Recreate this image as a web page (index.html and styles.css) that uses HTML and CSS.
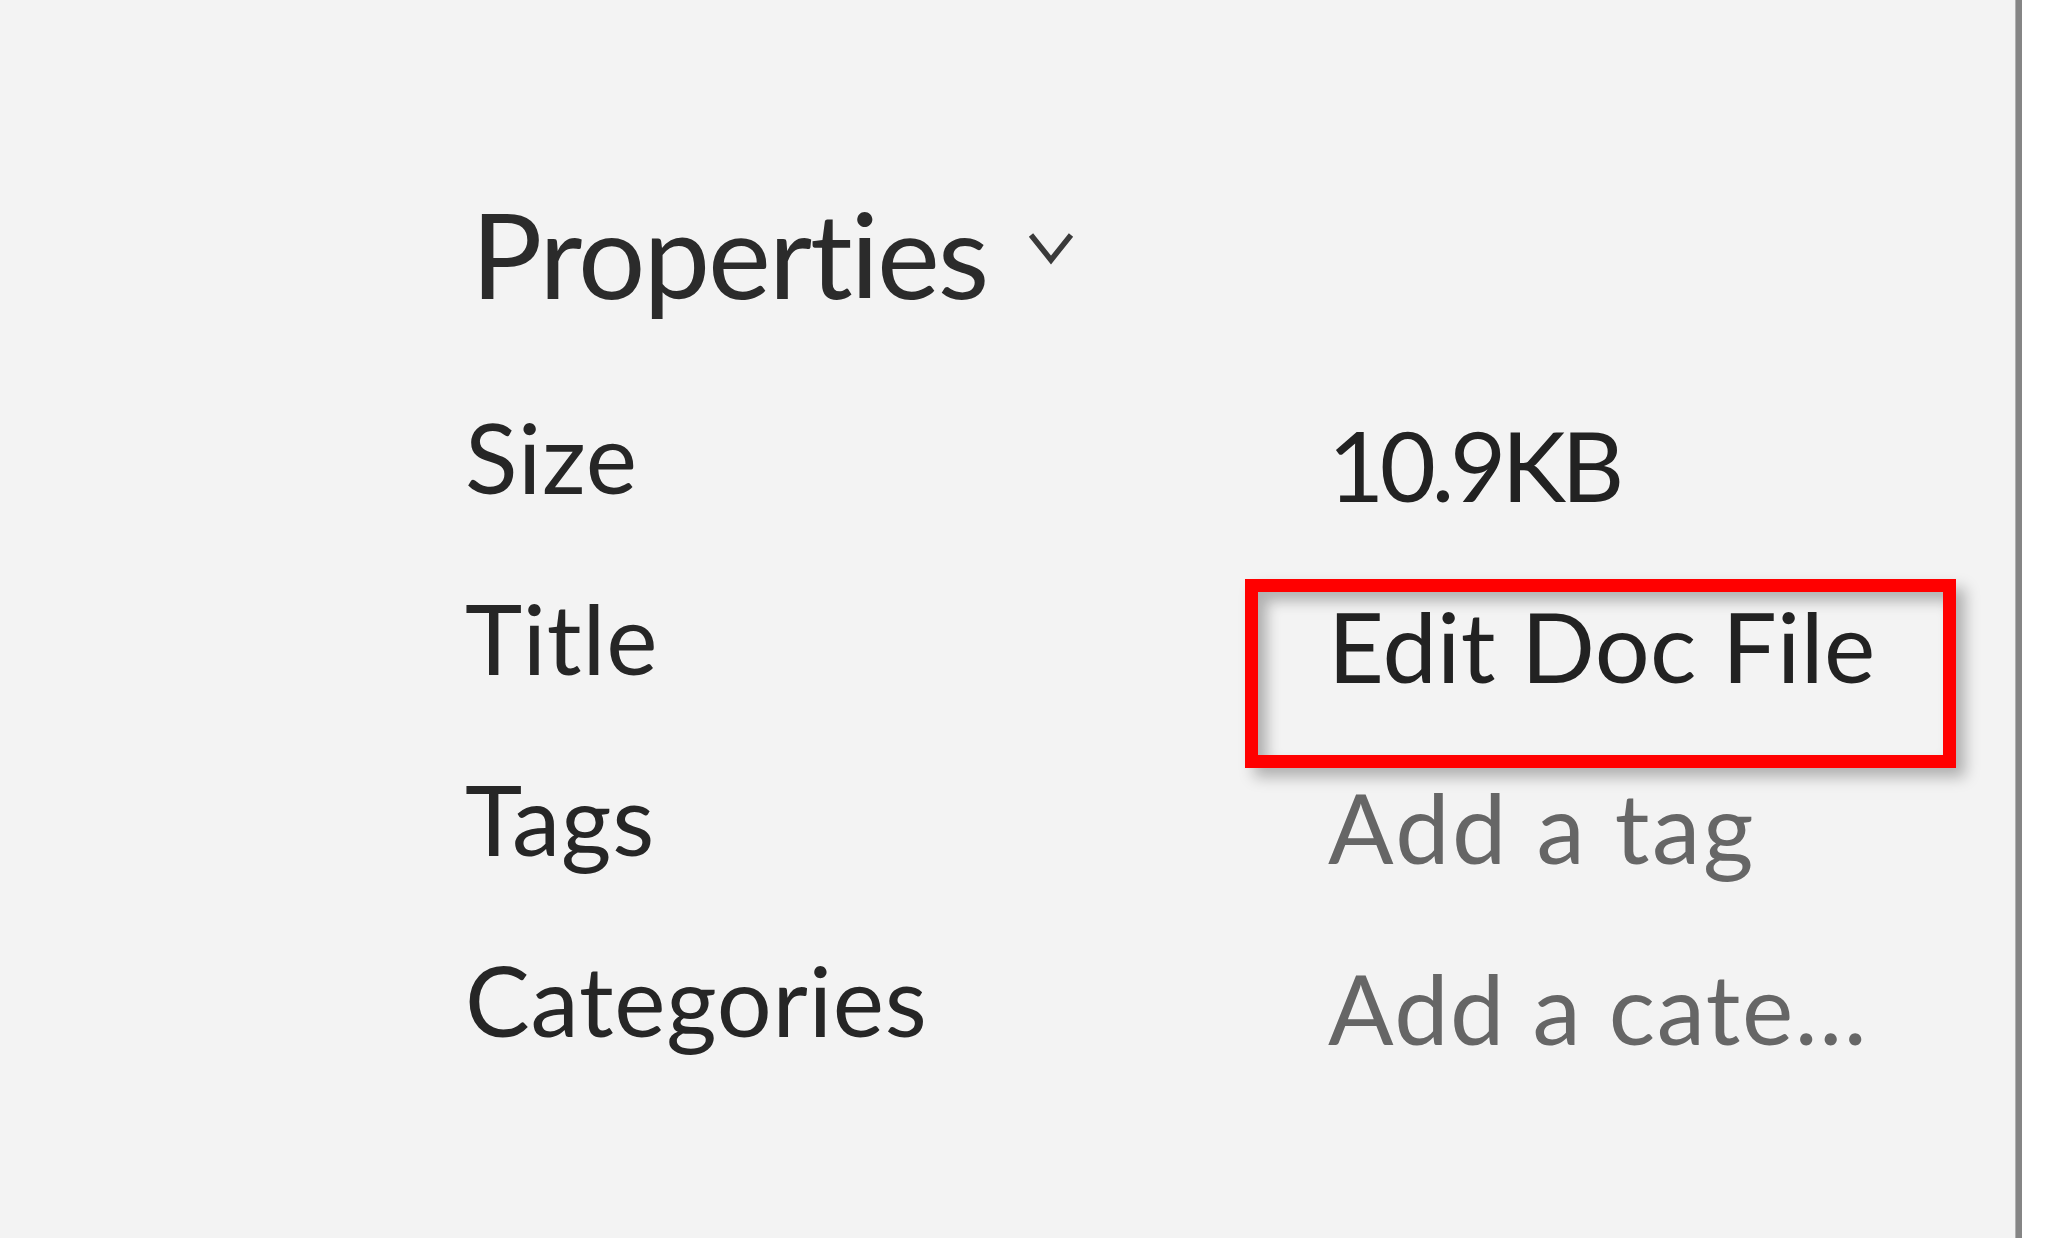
FILE: index.html
```html
<!DOCTYPE html>
<html lang="en">
<head>
<meta charset="utf-8">
<title>Properties</title>
<link rel="stylesheet" href="styles.css">
</head>
<body>
<div class="window">
  <main class="panel">
    <h2 class="heading">
      <span class="heading-text">Properties</span>
      <svg class="chevron" width="48" height="34" viewBox="0 0 48 34" aria-hidden="true">
        <polyline points="4,4 24,29 44,4" fill="none" stroke="#3a3a3a" stroke-width="5.5"/>
      </svg>
    </h2>
    <div class="props">
      <div class="row">
        <div class="label">Size</div>
        <div class="value value-size">10.9KB</div>
      </div>
      <div class="row">
        <div class="label">Title</div>
        <div class="value value-title">Edit Doc File<span class="highlight"></span></div>
      </div>
      <div class="row">
        <div class="label">Tags</div>
        <div class="value placeholder">Add a tag</div>
      </div>
      <div class="row">
        <div class="label">Categories</div>
        <div class="value placeholder placeholder-long">Add a cate...</div>
      </div>
    </div>
  </main>
  <div class="divider"></div>
  <div class="outside"></div>
</div>
</body>
</html>
```

FILE: styles.css
```css
html, body {
  margin: 0;
  padding: 0;
  height: 100%;
}

body {
  font-family: "Lato", "Open Sans", sans-serif;
  background: #ffffff;
  overflow: hidden;
}

.window {
  display: flex;
  height: 1238px;
}

.panel {
  flex: 1;
  background: #f3f3f3;
  padding: 182px 0 0 465px;
  box-sizing: border-box;
}

.divider {
  width: 6px;
  background: #858585;
  border-left: 1px solid #b0b0b0;
}

.outside {
  width: 26px;
  background: #ffffff;
}

.heading {
  display: flex;
  align-items: flex-start;
  margin: 0 0 41px 6px;
  font-weight: 400;
  font-size: 119px;
  line-height: 1.2;
  color: #2b2b2b;
  letter-spacing: -2.1px;
}

.chevron {
  margin-top: 49px;
  margin-left: 40px;
}

.props {
  display: flex;
  flex-direction: column;
}

.row {
  display: grid;
  grid-template-columns: 863px 1fr;
  height: 181px;
  font-size: 97px;
  line-height: 181px;
}

.label {
  color: #262626;
  letter-spacing: 0.8px;
}

.value {
  position: relative;
  padding-top: 16px;
  line-height: 165px;
  color: #222222;
  white-space: nowrap;
}

.value-size {
  letter-spacing: -4.5px;
}

.value-title {
  letter-spacing: 0.4px;
}

.placeholder {
  color: #666666;
  letter-spacing: 2.6px;
}

.placeholder-long {
  letter-spacing: 1.6px;
}

.highlight {
  position: absolute;
  left: -83px;
  top: 32px;
  width: 711px;
  height: 189px;
  box-sizing: border-box;
  border: 13px solid #ff0000;
  box-shadow: 9px 9px 14px rgba(0, 0, 0, 0.28), inset 9px 9px 14px rgba(0, 0, 0, 0.28);
  pointer-events: none;
}
```
